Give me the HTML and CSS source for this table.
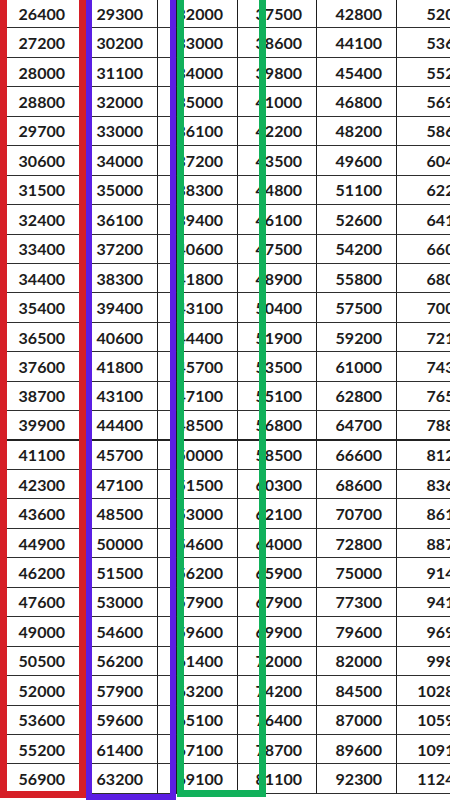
FILE: index.html
```html
<!DOCTYPE html>
<html lang="en">
<head>
<meta charset="utf-8">
<title>Salary table</title>
<link rel="stylesheet" href="styles.css">
</head>
<body>
<div class="page">
  <div class="sheet">
    <div class="row"><div>26400</div><div>29300</div><div></div><div>32000</div><div>37500</div><div>42800</div><div>52000</div></div>
    <div class="row"><div>27200</div><div>30200</div><div></div><div>33000</div><div>38600</div><div>44100</div><div>53600</div></div>
    <div class="row"><div>28000</div><div>31100</div><div></div><div>34000</div><div>39800</div><div>45400</div><div>55200</div></div>
    <div class="row"><div>28800</div><div>32000</div><div></div><div>35000</div><div>41000</div><div>46800</div><div>56900</div></div>
    <div class="row"><div>29700</div><div>33000</div><div></div><div>36100</div><div>42200</div><div>48200</div><div>58600</div></div>
    <div class="row"><div>30600</div><div>34000</div><div></div><div>37200</div><div>43500</div><div>49600</div><div>60400</div></div>
    <div class="row"><div>31500</div><div>35000</div><div></div><div>38300</div><div>44800</div><div>51100</div><div>62200</div></div>
    <div class="row"><div>32400</div><div>36100</div><div></div><div>39400</div><div>46100</div><div>52600</div><div>64100</div></div>
    <div class="row"><div>33400</div><div>37200</div><div></div><div>40600</div><div>47500</div><div>54200</div><div>66000</div></div>
    <div class="row"><div>34400</div><div>38300</div><div></div><div>41800</div><div>48900</div><div>55800</div><div>68000</div></div>
    <div class="row"><div>35400</div><div>39400</div><div></div><div>43100</div><div>50400</div><div>57500</div><div>70000</div></div>
    <div class="row"><div>36500</div><div>40600</div><div></div><div>44400</div><div>51900</div><div>59200</div><div>72100</div></div>
    <div class="row"><div>37600</div><div>41800</div><div></div><div>45700</div><div>53500</div><div>61000</div><div>74300</div></div>
    <div class="row"><div>38700</div><div>43100</div><div></div><div>47100</div><div>55100</div><div>62800</div><div>76500</div></div>
    <div class="row seam"><div>39900</div><div>44400</div><div></div><div>48500</div><div>56800</div><div>64700</div><div>78800</div></div>
    <div class="row"><div>41100</div><div>45700</div><div></div><div>50000</div><div>58500</div><div>66600</div><div>81200</div></div>
    <div class="row"><div>42300</div><div>47100</div><div></div><div>51500</div><div>60300</div><div>68600</div><div>83600</div></div>
    <div class="row"><div>43600</div><div>48500</div><div></div><div>53000</div><div>62100</div><div>70700</div><div>86100</div></div>
    <div class="row"><div>44900</div><div>50000</div><div></div><div>54600</div><div>64000</div><div>72800</div><div>88700</div></div>
    <div class="row"><div>46200</div><div>51500</div><div></div><div>56200</div><div>65900</div><div>75000</div><div>91400</div></div>
    <div class="row"><div>47600</div><div>53000</div><div></div><div>57900</div><div>67900</div><div>77300</div><div>94100</div></div>
    <div class="row"><div>49000</div><div>54600</div><div></div><div>59600</div><div>69900</div><div>79600</div><div>96900</div></div>
    <div class="row"><div>50500</div><div>56200</div><div></div><div>61400</div><div>72000</div><div>82000</div><div>99800</div></div>
    <div class="row"><div>52000</div><div>57900</div><div></div><div>63200</div><div>74200</div><div>84500</div><div>102800</div></div>
    <div class="row"><div>53600</div><div>59600</div><div></div><div>65100</div><div>76400</div><div>87000</div><div>105900</div></div>
    <div class="row"><div>55200</div><div>61400</div><div></div><div>67100</div><div>78700</div><div>89600</div><div>109100</div></div>
    <div class="row"><div>56900</div><div>63200</div><div></div><div>69100</div><div>81100</div><div>92300</div><div>112400</div></div>
  </div>
  <div class="box box-red"></div>
  <div class="box box-blue"></div>
  <div class="box box-green"></div>
</div>
</body>
</html>
```
FILE: styles.css
```css
html, body {
  margin: 0;
  padding: 0;
  background: #ffffff;
  overflow: hidden;
}

.page {
  position: relative;
  width: 450px;
  height: 800px;
  overflow: hidden;
  background: #ffffff;
}

.sheet {
  margin-top: -1px;
  width: 488px;
  font-family: Lato, "Open Sans", "Liberation Sans", sans-serif;
  font-size: 16px;
  font-weight: 700;
  color: #1c1c1c;
}

.row {
  display: grid;
  grid-template-columns: 80px 78px 19px 61px 79px 80px 91px;
  height: 29.45px;
}

.row > div {
  box-sizing: border-box;
  border-right: 1.5px solid #1e1e1e;
  border-bottom: 1.5px solid #2e2e2e;
  display: flex;
  align-items: center;
  justify-content: flex-end;
  padding-right: 14px;
  white-space: nowrap;
}

.seam > div {
  border-bottom: 2px solid #222222;
}

.box {
  position: absolute;
  top: -20px;
  box-sizing: border-box;
  border-style: solid;
}

.box-red {
  left: 0;
  width: 86px;
  height: 818px;
  border-width: 7px;
  border-color: #d61f27;
}

.box-blue {
  left: 86px;
  width: 89.5px;
  height: 819.5px;
  border-width: 6.5px;
  border-color: #5b1ee3;
}

.box-green {
  left: 176.5px;
  width: 89px;
  height: 817px;
  border-width: 7px;
  border-color: #11b15b;
}
```
